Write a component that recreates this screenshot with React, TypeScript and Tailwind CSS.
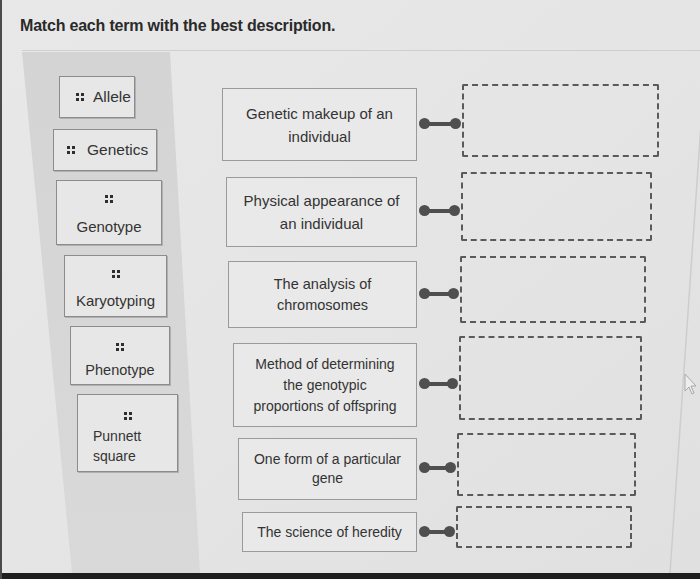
import React from "react";

const Grip = () => (
  <span className="grid grid-cols-2 gap-[2px] w-[8px] h-[8px] shrink-0">
    <span className="bg-[#2e2e2e] w-[3px] h-[3px]" />
    <span className="bg-[#2e2e2e] w-[3px] h-[3px]" />
    <span className="bg-[#2e2e2e] w-[3px] h-[3px]" />
    <span className="bg-[#2e2e2e] w-[3px] h-[3px]" />
  </span>
);

const cardBase =
  "bg-[#e7e7e7] border border-[#8c8c8c] shadow-[1px_1px_0_#b0b0b0] text-[#333]";

type Row = {
  lines: string[];
  desc: string;
  text: string;
  conn: string;
  dashed: string;
};

const rows: Row[] = [
  {
    lines: ["Genetic makeup of an", "individual"],
    desc: "ml-[22px] w-[195px] mt-[4px] h-[73px]",
    text: "text-[15px] leading-[23px]",
    conn: "ml-[2px] w-[42px] mt-[34px]",
    dashed: "ml-[1px] w-[197px] h-[73px]",
  },
  {
    lines: ["Physical appearance of", "an individual"],
    desc: "ml-[26px] w-[191px] mt-[5px] h-[70px]",
    text: "text-[15px] leading-[23px]",
    conn: "ml-[2px] w-[41px] mt-[33px]",
    dashed: "ml-[1px] w-[191px] h-[69px]",
  },
  {
    lines: ["The analysis of", "chromosomes"],
    desc: "ml-[28px] w-[189px] mt-[5px] h-[67px]",
    text: "text-[14.5px] leading-[21px]",
    conn: "ml-[2px] w-[40px] mt-[32px]",
    dashed: "ml-[1px] w-[186px] h-[67px]",
  },
  {
    lines: ["Method of determining", "the genotypic", "proportions of offspring"],
    desc: "ml-[33px] w-[184px] mt-[7px] h-[84px]",
    text: "text-[14px] leading-[21px]",
    conn: "ml-[2px] w-[39px] mt-[42px]",
    dashed: "ml-[1px] w-[183px] h-[84px]",
  },
  {
    lines: ["One form of a particular", "gene"],
    desc: "ml-[38px] w-[179px] mt-[5px] h-[62px]",
    text: "text-[14px] leading-[19px]",
    conn: "ml-[2px] w-[37px] mt-[29px]",
    dashed: "ml-[1px] w-[179px] h-[63px]",
  },
  {
    lines: ["The science of heredity"],
    desc: "ml-[42px] w-[175px] mt-[6px] h-[40px]",
    text: "text-[14px] leading-[19px]",
    conn: "ml-[2px] w-[36px] mt-[20px]",
    dashed: "ml-[1px] w-[176px] h-[42px]",
  },
];

const rowGaps = ["mt-[32px]", "mt-[11px]", "mt-[9px]", "mt-[8px]", "mt-[6px]", "mt-[6px]"];

export default function App() {
  return (
    <div
      className="relative w-[700px] h-[579px] overflow-hidden border-l-2 border-[#4a4a4a] bg-gradient-to-br from-[#e8e8e8] via-[#e5e5e5] to-[#e0e0e0] text-[#333]"
      style={{ fontFamily: '"Liberation Sans", Arial, sans-serif' }}
    >
      <div className="h-[50px] pl-[18px] pt-[16px] text-[16px] font-bold text-[#2a2a2a] leading-[20px] tracking-[-0.2px]">
        Match each term with the best description.
      </div>
      <div className="ml-[20px] h-px bg-[#cfcfcf]" />
      <div className="flex h-[522px] pt-px">
        {/* Left term panel */}
        <div
          className="ml-[20px] w-[178px] h-[521px] bg-gradient-to-b from-[#d4d4d4] to-[#d9d9d9] flex flex-col items-start pt-[24px]"
          style={{ clipPath: "polygon(0 0, 148px 0, 178px 100%, 50px 100%)" }}
        >
          <div className={`${cardBase} ml-[37px] w-[76px] h-[42px] flex items-center gap-[9px] pl-[16px] text-[15.5px]`}>
            <Grip />
            <span>Allele</span>
          </div>
          <div className={`${cardBase} mt-[11px] ml-[31px] w-[104px] h-[42px] flex items-center gap-[12px] pl-[13px] text-[15.5px]`}>
            <Grip />
            <span>Genetics</span>
          </div>
          <div className={`${cardBase} mt-[9px] ml-[34px] w-[106px] h-[65px] flex flex-col items-center pt-[14px] gap-[15px] text-[15px] leading-[17px]`}>
            <Grip />
            <span>Genotype</span>
          </div>
          <div className={`${cardBase} mt-[10px] ml-[42px] w-[103px] h-[62px] flex flex-col items-center pt-[14px] gap-[14px] text-[15px] leading-[17px]`}>
            <Grip />
            <span>Karyotyping</span>
          </div>
          <div className={`${cardBase} mt-[9px] ml-[48px] w-[100px] h-[59px] flex flex-col items-center pt-[16px] gap-[11px] text-[14.5px] leading-[17px]`}>
            <Grip />
            <span>Phenotype</span>
          </div>
          <div className={`${cardBase} mt-[9px] ml-[55px] w-[101px] h-[78px] flex flex-col pt-[17px] text-[14px] leading-[20px]`}>
            <div className="flex justify-center">
              <Grip />
            </div>
            <div className="pl-[15px] mt-[6px]">
              Punnett
              <br />
              square
            </div>
          </div>
        </div>

        {/* Right: descriptions, connectors, drop targets */}
        <div className="flex flex-col">
          {rows.map((r, i) => (
            <div key={i} className={`flex items-start ${rowGaps[i]}`}>
              <div
                className={`${r.desc} bg-[#e9e9e9] border border-[#9a9a9a] flex flex-col items-center justify-center text-center text-[#333] ${r.text}`}
              >
                {r.lines.map((l, j) => (
                  <span key={j}>{l}</span>
                ))}
              </div>
              <div className={`${r.conn} h-[11px] flex items-center`}>
                <span className="w-[11px] h-[11px] rounded-full bg-[#4f4f4f] shrink-0" />
                <span className="flex-1 h-[4px] bg-[#4f4f4f] -mx-[2px]" />
                <span className="w-[11px] h-[11px] rounded-full bg-[#4f4f4f] shrink-0" />
              </div>
              <div className={`${r.dashed} border-2 border-dashed border-[#5a5a5a] rounded-[2px]`} />
            </div>
          ))}
        </div>
      </div>
      <div className="h-[6px] bg-[#1e1e1e]" />

      {/* screen edge & cursor (photo overlay) */}
      <svg className="absolute left-0 top-0 pointer-events-none" width="700" height="579">
        <line x1="704" y1="52" x2="668" y2="573" stroke="#cdcdcd" strokeWidth="1.5" />
        <path
          d="M683 374 L683 391 L687 387 L690 394 L692 393 L689 386 L694 386 Z"
          fill="#eeeeee"
          stroke="#a8a8a8"
          strokeWidth="1"
        />
      </svg>
    </div>
  );
}
